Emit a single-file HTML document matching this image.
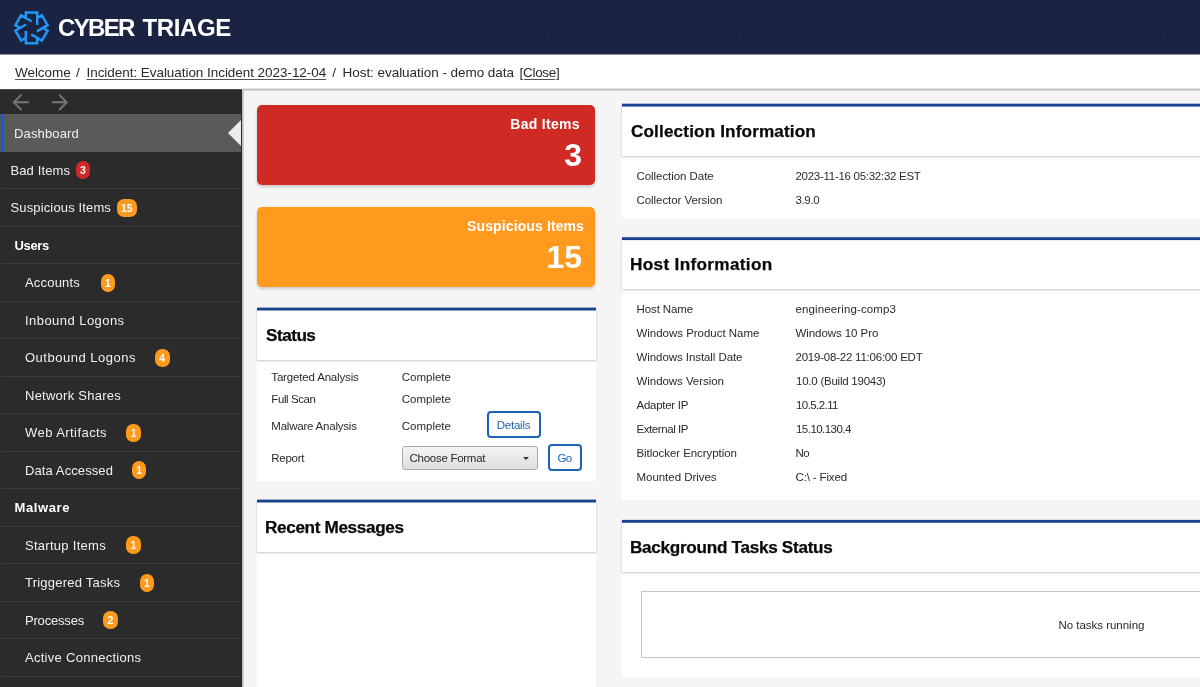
<!DOCTYPE html>
<html><head><meta charset="utf-8">
<style>
*{box-sizing:border-box;margin:0;padding:0}
html,body{width:1200px;height:687px;overflow:hidden;background:#f5f5f5;font-family:"Liberation Sans",sans-serif;}
#root{position:absolute;left:0;top:0;width:1200px;height:687px;will-change:transform}
.abs{position:absolute}
#hdr{position:absolute;left:0;top:0;width:1200px;height:55px;background:#1a2341;border-bottom:1px solid #8d91a0}
#hdr .stripes{position:absolute;left:240px;top:0;width:960px;height:38px;background:repeating-linear-gradient(90deg,transparent 0,transparent 60.6px,rgba(0,0,0,.1) 60.6px,rgba(0,0,0,.1) 61.6px);background-position:4px 0}
#hdr .ttl{position:absolute;left:58px;top:13px;font-size:24px;font-weight:bold;color:#fff;line-height:30px;white-space:nowrap;letter-spacing:-1.03px}
#hdr .ttl i{font-style:normal;position:relative}
#bc{position:absolute;left:0;top:55px;width:1200px;height:34px;background:#fffffd;font-size:13.5px;color:#2a2a2a;line-height:36px;white-space:nowrap;}
#bc span{position:absolute;top:0}
#bc u{text-decoration:underline;text-decoration-thickness:1px;text-underline-offset:2px;text-decoration-color:#555}
#side{position:absolute;left:0;top:89px;width:242px;height:598px;background:#2b2b2b;overflow:hidden}
#split{position:absolute;left:242px;top:89px;width:2px;height:598px;background:linear-gradient(90deg,#bfbdc1 0,#bfbdc1 1px,#d2d0d4 1px,#d2d0d4 2px);}
#topline{position:absolute;left:242px;top:88px;width:958px;height:3px;background:linear-gradient(#e3e2e4 0,#e3e2e4 1px,#c3c1c4 1px,#c3c1c4 2px,#d4d2d5 2px,#d4d2d5 3px);}
.row{position:absolute;left:1px;width:240px;border-bottom:1px solid #3b3b3b;color:#f0f0f0;font-size:13px;white-space:nowrap;}
.row span{top:0}
.row b{font-weight:bold;color:#fff}
.row .bdg{position:absolute;top:10px;height:18px;border-radius:7px;background:#ff9a1f;color:#fff;font-size:10.5px;font-weight:bold;line-height:19px;text-align:center;}
.row .bdg.red{background:#d32828}
.card{position:absolute;left:257px;width:338px;height:80px;border-radius:5px;color:#fff;box-shadow:0 2px 3px rgba(0,0,0,.18);}
.card .t{position:absolute;right:15px;top:10px;font-size:14px;font-weight:bold;line-height:18px;white-space:nowrap}
.card .n{position:absolute;right:13px;top:32px;font-size:32px;font-weight:bold;line-height:36px}
.pnl{position:absolute;background:#fff;}
.ph{position:absolute;left:0;top:0;right:0;background:#fff;box-shadow:0 1px 2px rgba(0,0,0,.22)}
.bb{position:absolute;left:0;right:0;top:0;height:3px;background:#24509b}
.pt{position:absolute;transform:scaleX(1.07);transform-origin:0 0;font-size:16px;font-weight:bold;color:#0a0a0a;white-space:nowrap;line-height:20px;-webkit-text-stroke:.25px #0a0a0a}
.kv{position:absolute;font-size:11.5px;color:#2a2a2a;white-space:nowrap;line-height:14px}
.btn{position:absolute;border:2px solid #1c63b7;border-radius:4px;background:#fff;color:#1c63b7;font-size:12px;text-align:center;}

</style></head><body>
<div id="root">
<div id="hdr">
<div class="stripes"></div>
<svg class="abs" style="left:0;top:0" width="60" height="55" viewBox="0 0 60 55" fill="none" stroke="#2196f3" stroke-width="2.5" stroke-linejoin="miter" stroke-linecap="butt"><path d="M25.80 18.03 L25.80 12.60 L37.20 12.60 L37.20 24.90 M37.20 18.03 L41.90 15.31 L47.60 25.19 L36.95 31.34 M42.90 27.90 L47.60 30.61 L41.90 40.49 L31.25 34.34 M37.20 37.77 L37.20 43.20 L25.80 43.20 L25.80 30.90 M25.80 37.77 L21.10 40.49 L15.40 30.61 L26.05 24.46 M20.10 27.90 L15.40 25.19 L21.10 15.31 L31.75 21.46"/></svg>
<div class="ttl"><span class="abs" style="left:0;letter-spacing:-1.66px">CYBER</span><span class="abs" style="left:84.5px;letter-spacing:-0.38px">TRIAGE</span></div>
</div>
<div id="bc">
<span style="left:15px;letter-spacing:-.05px"><u>Welcome</u></span>
<span style="left:76px">/</span>
<span style="left:86.5px;letter-spacing:-.05px"><u>Incident: Evaluation Incident 2023-12-04</u></span>
<span style="left:332.3px">/</span>
<span style="left:342.5px;letter-spacing:-.04px">Host: evaluation - demo data</span>
<span style="left:519.5px;letter-spacing:-.29px"><u>[Close]</u></span>
</div>
<div id="side">
<div class="abs" style="left:0;top:0;width:242px;height:1px;background:#4c4c4c"></div>
<svg class="abs" style="left:10px;top:4px" width="70" height="18" viewBox="0 0 70 18" fill="none" stroke="#777876" stroke-width="1.9"><path d="M18.9 9.3H4M11.5 1.6L3.8 9.3l7.7 7.7"/><path d="M41.8 9.3H57M49.1 1.6l7.7 7.7-7.7 7.7"/></svg>
<div class="abs" style="left:0;top:25px;width:241px;height:38px;background:#595b59"></div>
<div class="abs" style="left:1px;top:25px;width:3px;height:38px;background:#0d5bf0"></div>
<div class="abs" style="left:228px;top:31px;width:0;height:0;border-top:13px solid transparent;border-bottom:13px solid transparent;border-right:13px solid #ececec"></div>
<div class="row" style="top:25px;height:37px;border:0;line-height:39px"><span class="abs" style="left:13px;letter-spacing:0.15px">Dashboard</span></div>
<div class="row" style="top:63px;height:37px;line-height:37.2px"><span class="abs" style="left:9.5px;letter-spacing:0.11px">Bad Items</span><span class="bdg red" style="left:74.6px;width:14.5px;top:9.0px">3</span></div>
<div class="row" style="top:100px;height:38px;line-height:38.2px"><span class="abs" style="left:9.5px;letter-spacing:0.14px">Suspicious Items</span><span class="bdg" style="left:115.6px;width:20.5px;top:9.5px">15</span></div>
<div class="row" style="top:138px;height:37px;line-height:37.2px"><span class="abs" style="left:13.5px;letter-spacing:-0.33px"><b>Users</b></span></div>
<div class="row" style="top:175px;height:38px;line-height:38.2px"><span class="abs" style="left:24px;letter-spacing:0.19px">Accounts</span><span class="bdg" style="left:99.6px;width:14.5px;top:9.5px">1</span></div>
<div class="row" style="top:213px;height:37px;line-height:37.2px"><span class="abs" style="left:24px;letter-spacing:0.45px">Inbound Logons</span></div>
<div class="row" style="top:250px;height:38px;line-height:38.2px"><span class="abs" style="left:24px;letter-spacing:0.51px">Outbound Logons</span><span class="bdg" style="left:153.6px;width:15px;top:9.5px">4</span></div>
<div class="row" style="top:288px;height:37px;line-height:37.2px"><span class="abs" style="left:24px;letter-spacing:0.25px">Network Shares</span></div>
<div class="row" style="top:325px;height:38px;line-height:38.2px"><span class="abs" style="left:24px;letter-spacing:0.44px">Web Artifacts</span><span class="bdg" style="left:125.39999999999999px;width:14.5px;top:9.5px">1</span></div>
<div class="row" style="top:363px;height:37px;line-height:37.2px"><span class="abs" style="left:24px;letter-spacing:0.1px">Data Accessed</span><span class="bdg" style="left:130.9px;width:14.5px;top:9.0px">1</span></div>
<div class="row" style="top:400px;height:38px;line-height:38.2px"><span class="abs" style="left:13.5px;letter-spacing:0.6px"><b>Malware</b></span></div>
<div class="row" style="top:438px;height:37px;line-height:37.2px"><span class="abs" style="left:24px;letter-spacing:0.28px">Startup Items</span><span class="bdg" style="left:125.1px;width:14.5px;top:9.0px">1</span></div>
<div class="row" style="top:475px;height:38px;line-height:38.2px"><span class="abs" style="left:24px;letter-spacing:0.23px">Triggered Tasks</span><span class="bdg" style="left:138.6px;width:14.5px;top:9.5px">1</span></div>
<div class="row" style="top:513px;height:37px;line-height:37.2px"><span class="abs" style="left:24px;letter-spacing:-0.19px">Processes</span><span class="bdg" style="left:102.1px;width:14.5px;top:9.0px">2</span></div>
<div class="row" style="top:550px;height:38px;line-height:38.2px"><span class="abs" style="left:24px;letter-spacing:0.28px">Active Connections</span></div>
<div class="row" style="top:588px;height:38px;line-height:37.2px"><span class="abs" style="left:24px;letter-spacing:0px"></span></div>
</div>
<div id="split"></div>
<div id="topline"></div>
<div class="card" style="top:105px;background:#cf2a24"><div class="t" style="right:15.2px;letter-spacing:.29px">Bad Items</div><div class="n">3</div></div>
<div class="card" style="top:207px;background:#ff9a1f"><div class="t" style="right:11px;letter-spacing:.11px">Suspicious Items</div><div class="n">15</div></div>
<div class="pnl" style="left:257px;top:308px;width:339px;height:173px">
<div class="ph" style="height:52px"></div><div class="abs" style="left:0;right:0;top:-1px;height:4px;background:linear-gradient(rgba(26,67,143,0.4) 0px,rgba(26,67,143,0.4) 1px,rgba(26,67,143,1) 1px,rgba(26,67,143,1) 2px,rgba(26,67,143,1) 2px,rgba(26,67,143,1) 3px,rgba(26,67,143,0.5) 3px,rgba(26,67,143,0.5) 4px)"></div>
<div class="pt" style="left:9.30px;top:17.76px;letter-spacing:-0.454px">Status</div>
<div class="kv" style="left:14.30px;top:62.32px;letter-spacing:-0.164px">Targeted Analysis</div>
<div class="kv" style="left:14.30px;top:83.82px;letter-spacing:-0.418px">Full Scan</div>
<div class="kv" style="left:14.30px;top:110.62px;letter-spacing:-0.215px">Malware Analysis</div>
<div class="kv" style="left:14.30px;top:142.92px;letter-spacing:-0.284px">Report</div>
<div class="kv" style="left:144.80px;top:62.32px;letter-spacing:-0.017px">Complete</div>
<div class="kv" style="left:144.80px;top:83.82px;letter-spacing:-0.017px">Complete</div>
<div class="kv" style="left:144.80px;top:110.62px;letter-spacing:-0.017px">Complete</div>
<div class="btn" style="left:230px;top:103px;width:54px;height:27px"></div>
<div class="kv" style="left:239.80px;top:110.42px;letter-spacing:-0.25px;color:#1c63b7">Details</div>
<div class="abs" style="left:144.5px;top:138px;width:136px;height:24px;border:1px solid #adadad;border-radius:3px;background:linear-gradient(#f4f4f4,#dedede)"></div>
<div class="kv" style="left:152.50px;top:142.92px;letter-spacing:-0.272px">Choose Format</div>
<span class="abs" style="left:265.5px;top:148.5px;width:0;height:0;border-left:3.5px solid transparent;border-right:3.5px solid transparent;border-top:3.5px solid #333"></span>
<div class="btn" style="left:291px;top:136px;width:34px;height:27px"></div>
<div class="kv" style="left:300.50px;top:142.92px;letter-spacing:-0.745px;color:#1c63b7">Go</div>
</div>
<div class="pnl" style="left:257px;top:500px;width:339px;height:187px">
<div class="ph" style="height:52px"></div><div class="abs" style="left:0;right:0;top:-1px;height:4px;background:linear-gradient(rgba(26,67,143,0.4) 0px,rgba(26,67,143,0.4) 1px,rgba(26,67,143,1) 1px,rgba(26,67,143,1) 2px,rgba(26,67,143,1) 2px,rgba(26,67,143,1) 3px,rgba(26,67,143,0.5) 3px,rgba(26,67,143,0.5) 4px)"></div>
<div class="pt" style="left:8.30px;top:17.96px;letter-spacing:-0.316px">Recent Messages</div>
</div>
<div class="pnl" style="left:622px;top:104px;width:600px;height:114px">
<div class="ph" style="height:52px"></div><div class="abs" style="left:0;right:0;top:-1px;height:4px;background:linear-gradient(rgba(26,67,143,0.3) 0px,rgba(26,67,143,0.3) 1px,rgba(26,67,143,1) 1px,rgba(26,67,143,1) 2px,rgba(26,67,143,1) 2px,rgba(26,67,143,1) 3px,rgba(26,67,143,0.6) 3px,rgba(26,67,143,0.6) 4px)"></div>
<div class="pt" style="left:9.20px;top:17.76px;letter-spacing:0.141px">Collection Information</div>
<div class="kv" style="left:14.50px;top:64.62px;letter-spacing:-0.056px">Collection Date</div>
<div class="kv" style="left:173.50px;top:64.62px;letter-spacing:-0.28px">2023-11-16 05:32:32 EST</div>
<div class="kv" style="left:14.50px;top:88.62px;letter-spacing:-0.058px">Collector Version</div>
<div class="kv" style="left:173.50px;top:88.62px;letter-spacing:-0.37px">3.9.0</div>
</div>
<div class="pnl" style="left:622px;top:237px;width:600px;height:263px">
<div class="ph" style="height:52px"></div><div class="abs" style="left:0;right:0;top:0px;height:4px;background:linear-gradient(rgba(26,67,143,0.8) 0px,rgba(26,67,143,0.8) 1px,rgba(26,67,143,1) 1px,rgba(26,67,143,1) 2px,rgba(26,67,143,1) 2px,rgba(26,67,143,1) 3px,rgba(26,67,143,0.1) 3px,rgba(26,67,143,0.1) 4px)"></div>
<div class="pt" style="left:8.20px;top:18.46px;letter-spacing:0.327px">Host Information</div>
<div class="kv" style="left:14.50px;top:64.92px;letter-spacing:-0.103px">Host Name</div>
<div class="kv" style="left:173.50px;top:64.92px;letter-spacing:0.121px">engineering-comp3</div>
<div class="kv" style="left:14.50px;top:88.92px;letter-spacing:-0.024px">Windows Product Name</div>
<div class="kv" style="left:173.50px;top:88.92px;letter-spacing:-0.072px">Windows 10 Pro</div>
<div class="kv" style="left:14.50px;top:112.92px;letter-spacing:-0.073px">Windows Install Date</div>
<div class="kv" style="left:173.50px;top:112.92px;letter-spacing:-0.223px">2019-08-22 11:06:00 EDT</div>
<div class="kv" style="left:14.50px;top:136.92px;letter-spacing:-0.058px">Windows Version</div>
<div class="kv" style="left:174.00px;top:136.92px;letter-spacing:-0.238px">10.0 (Build 19043)</div>
<div class="kv" style="left:14.50px;top:160.92px;letter-spacing:-0.263px">Adapter IP</div>
<div class="kv" style="left:174.00px;top:160.92px;letter-spacing:-0.576px">10.5.2.11</div>
<div class="kv" style="left:14.50px;top:184.92px;letter-spacing:-0.428px">External IP</div>
<div class="kv" style="left:174.00px;top:184.92px;letter-spacing:-0.536px">15.10.130.4</div>
<div class="kv" style="left:14.50px;top:208.92px;letter-spacing:-0.065px">Bitlocker Encryption</div>
<div class="kv" style="left:173.50px;top:208.92px;letter-spacing:-0.505px">No</div>
<div class="kv" style="left:14.50px;top:232.92px;letter-spacing:-0.037px">Mounted Drives</div>
<div class="kv" style="left:173.50px;top:232.92px;letter-spacing:-0.144px">C:\ - Fixed</div>
</div>
<div class="pnl" style="left:622px;top:520px;width:600px;height:157px">
<div class="ph" style="height:52px"></div><div class="abs" style="left:0;right:0;top:-1px;height:4px;background:linear-gradient(rgba(26,67,143,0.1) 0px,rgba(26,67,143,0.1) 1px,rgba(26,67,143,1) 1px,rgba(26,67,143,1) 2px,rgba(26,67,143,1) 2px,rgba(26,67,143,1) 3px,rgba(26,67,143,0.8) 3px,rgba(26,67,143,0.8) 4px)"></div>
<div class="pt" style="left:8.20px;top:18.46px;letter-spacing:-0.264px">Background Tasks Status</div>
<div class="abs" style="left:19px;top:71px;width:920px;height:67px;border:1px solid #c6c6c6;background:#fff"></div>
<div class="kv" style="left:436.50px;top:98.42px;letter-spacing:-0.027px">No tasks running</div>
</div>
</div>
</body></html>
